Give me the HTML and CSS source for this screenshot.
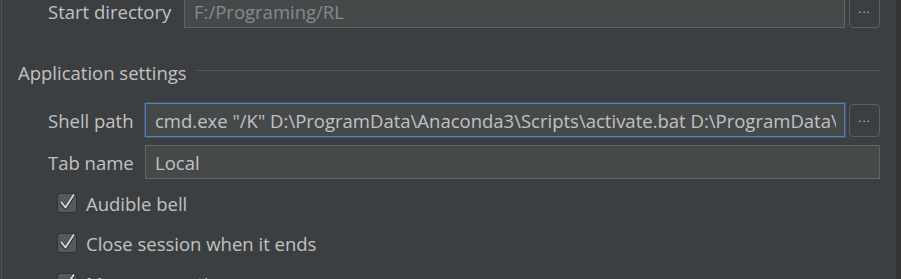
FILE: index.html
```html
<!DOCTYPE html>
<html>
<head>
<meta charset="utf-8">
<link rel="stylesheet" href="styles.css">
</head>
<body>
<div class="page">
  <div class="panel">
    <div class="row row-start">
      <span class="lbl lbl-start">Start directory</span>
      <div class="field disabled"><div class="clip">F:/Programing/RL</div></div>
      <button class="browse">...</button>
    </div>

    <div class="section">
      <span class="section-title">Application settings</span>
      <div class="sep"></div>
    </div>

    <div class="row row-shell">
      <span class="lbl">Shell path</span>
      <div class="field focused"><div class="clip">cmd.exe "/K" D:\ProgramData\Anaconda3\Scripts\activate.bat D:\ProgramData\Anaconda3</div></div>
      <button class="browse">...</button>
    </div>

    <div class="row row-tab">
      <span class="lbl">Tab name</span>
      <div class="field"><div class="clip">Local</div></div>
    </div>

    <div class="checks">
      <label class="check">
        <svg class="box" width="20" height="20" viewBox="0 0 20 20">
          <rect x="0.5" y="0.5" width="19" height="19" rx="2.5" class="box-bg"/>
          <path d="M4.5 10 L8.5 15 L16.5 2.5" class="tick-shadow"/>
          <path d="M4.5 9.5 L8.5 14.5 L16.5 2" class="tick"/>
        </svg>
        <span>Audible bell</span>
      </label>
      <label class="check">
        <svg class="box" width="20" height="20" viewBox="0 0 20 20">
          <rect x="0.5" y="0.5" width="19" height="19" rx="2.5" class="box-bg"/>
          <path d="M4.5 10 L8.5 15 L16.5 2.5" class="tick-shadow"/>
          <path d="M4.5 9.5 L8.5 14.5 L16.5 2" class="tick"/>
        </svg>
        <span>Close session when it ends</span>
      </label>
      <label class="check">
        <svg class="box" width="20" height="20" viewBox="0 0 20 20">
          <rect x="0.5" y="0.5" width="19" height="19" rx="2.5" class="box-bg"/>
          <path d="M4.5 10 L8.5 15 L16.5 2.5" class="tick-shadow"/>
          <path d="M4.5 9.5 L8.5 14.5 L16.5 2" class="tick"/>
        </svg>
        <span>Mouse reporting</span>
      </label>
    </div>
  </div>
  <div class="scroll"></div>
</div>
</body>
</html>
```

FILE: styles.css
```css
html, body {
  margin: 0;
  padding: 0;
  background: #3c3f41;
  overflow: hidden;
}
body {
  width: 901px;
  height: 279px;
  font-family: "Open Sans", "Noto Sans", sans-serif;
  font-size: 18.5px;
  color: #c2c2c2;
}
.page {
  display: flex;
  width: 901px;
  height: 279px;
  overflow: hidden;
}
.panel {
  flex: 1;
  min-width: 0;
  margin-left: 1px;
  border-left: 1px solid #4c4f53;
  padding-left: 46px;
  padding-right: 16px;
  display: flex;
  flex-direction: column;
}
.scroll {
  flex: 0 0 4px;
  background: #313335;
  border-left: 1px solid #35383a;
}
.row {
  display: flex;
  align-items: center;
  gap: 4px;
  min-width: 0;
}
.lbl {
  flex: 0 0 auto;
  width: 93px;
  white-space: nowrap;
}
.lbl-start {
  width: 132px;
}
.field {
  flex: 1 1 0;
  box-sizing: border-box;
  height: 34px;
  background: #45494a;
  border: 1px solid #646464;
  padding: 0 8px 0 9px;
  display: flex;
  align-items: center;
  min-width: 0;
  overflow: hidden;
}
.clip {
  overflow: hidden;
  white-space: nowrap;
  flex: 1 1 0;
  width: 0;
  min-width: 0;
}
.field.disabled {
  color: #858a8e;
}
.field.focused {
  border: 1px solid #5a7fae;
  box-shadow: 0 0 0 1px #3e5878;
  background: #45494a;
}
.browse {
  flex: 0 0 auto;
  box-sizing: border-box;
  width: 31px;
  height: 33px;
  border: 1px solid #5e6060;
  border-radius: 4px;
  background: #3c3f41;
  color: #dddddd;
  font-family: "DejaVu Sans", sans-serif;
  font-size: 10px;
  padding: 0 0 4px 0;
  letter-spacing: 1px;
}
.row-start {
  margin-top: -6px;
}
.section {
  display: flex;
  align-items: center;
  margin-left: -30px;
  margin-top: 33px;
  height: 22px;
  gap: 8px;
}
.section-title {
  white-space: nowrap;
}
.sep {
  flex: 1;
  height: 1px;
  background: #525456;
  margin-top: -3px;
}
.row-shell {
  margin-top: 20px;
}
.row-tab {
  margin-top: 8px;
}
.checks {
  display: flex;
  flex-direction: column;
  margin-top: 4px;
  padding-left: 9px;
}
.check {
  display: flex;
  align-items: center;
  gap: 9px;
  height: 40px;
}
.box {
  flex: 0 0 auto;
}
.box-bg {
  fill: #56595b;
  stroke: #2f3133;
  stroke-width: 1;
}
.tick-shadow {
  fill: none;
  stroke: #2a2c2e;
  stroke-width: 3.5;
  stroke-linecap: round;
  stroke-linejoin: round;
}
.tick {
  fill: none;
  stroke: #d6d6d6;
  stroke-width: 2;
  stroke-linecap: round;
  stroke-linejoin: round;
}
```
